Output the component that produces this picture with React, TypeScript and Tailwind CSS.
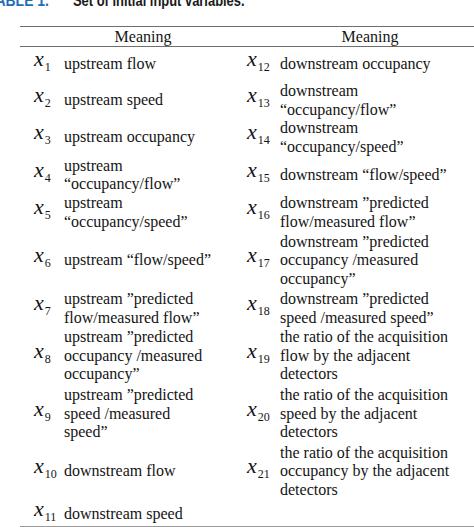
const ROWS: { h: number; l?: [string, string[]]; r?: [string, string[]] }[] = [
  { h: 35, l: ['1', ['upstream flow']], r: ['12', ['downstream occupancy']] },
  { h: 37, l: ['2', ['upstream speed']], r: ['13', ['downstream', '“occupancy/flow”']] },
  { h: 37, l: ['3', ['upstream occupancy']], r: ['14', ['downstream', '“occupancy/speed”']] },
  { h: 38, l: ['4', ['upstream', '“occupancy/flow”']], r: ['15', ['downstream “flow/speed”']] },
  { h: 37, l: ['5', ['upstream', '“occupancy/speed”']], r: ['16', ['downstream ”predicted', 'flow/measured flow”']] },
  { h: 59, l: ['6', ['upstream “flow/speed”']], r: ['17', ['downstream ”predicted', 'occupancy /measured', 'occupancy”']] },
  { h: 37, l: ['7', ['upstream ”predicted', 'flow/measured flow”']], r: ['18', ['downstream ”predicted', 'speed /measured speed”']] },
  { h: 58, l: ['8', ['upstream ”predicted', 'occupancy /measured', 'occupancy”']], r: ['19', ['the ratio of the acquisition', 'flow by the adjacent', 'detectors']] },
  { h: 58, l: ['9', ['upstream ”predicted', 'speed /measured', 'speed”']], r: ['20', ['the ratio of the acquisition', 'speed by the adjacent', 'detectors']] },
  { h: 57, l: ['10', ['downstream flow']], r: ['21', ['the ratio of the acquisition', 'occupancy by the adjacent', 'detectors']] },
  { h: 26, l: ['11', ['downstream speed']] },
];

function Variable({ sub, right }: { sub: string; right?: boolean }) {
  return (
    <div className={`flex items-center pb-[3px] ${right ? 'pl-[25px]' : 'pl-[14px]'}`}>
      <span className="whitespace-nowrap leading-[18px]">
        <span className="italic text-[22px]">x</span>
        <span className="text-[12px] align-[-5px] ml-[1px]">{sub}</span>
      </span>
    </div>
  );
}

function Meaning({ lines }: { lines: string[] }) {
  return (
    <div className="flex flex-col justify-center text-[16px] leading-[18.5px] whitespace-nowrap">
      {lines.map((t, i) => (
        <span key={i}>{t}</span>
      ))}
    </div>
  );
}

export default function App() {
  return (
    <div
      className="w-[474px] h-[527px] overflow-hidden bg-white text-[#141414]"
      style={{ fontFamily: '"Liberation Serif", "Times New Roman", serif' }}
    >
      {/* Caption, cut off by the crop */}
      <div
        className="-mt-[8px] h-[17px] flex items-start text-[17px] leading-[17px] font-bold whitespace-nowrap"
        style={{ fontFamily: '"Liberation Sans", Arial, sans-serif' }}
      >
        <span className="inline-block -ml-[12px] w-[85px] origin-left scale-x-[0.82] text-[#1d70b8]">TABLE 1.</span>
        <span className="inline-block origin-left scale-x-[0.76] text-[#1a1a1a]">Set of initial input variables.</span>
      </div>

      <div className="ml-[20px] mt-[17px] border-t-[1.5px] border-b-[2px] border-t-[#6e6e6e] border-b-[#9a9a9a]">
        {/* Header */}
        <div className="grid grid-cols-[44px_158px_58px_180px_1fr] h-[20px] border-b-[1.5px] border-[#6e6e6e] text-[16px] leading-[20px]">
          <div />
          <div className="text-center">Meaning</div>
          <div />
          <div className="text-center">Meaning</div>
          <div />
        </div>

        {ROWS.map((row, i) => (
          <div
            key={i}
            className="grid grid-cols-[44px_158px_58px_180px_1fr]"
            style={{ height: row.h }}
          >
            {row.l ? <Variable sub={row.l[0]} /> : <div />}
            {row.l ? <Meaning lines={row.l[1]} /> : <div />}
            {row.r ? <Variable sub={row.r[0]} right /> : <div />}
            {row.r ? <Meaning lines={row.r[1]} /> : <div />}
            <div />
          </div>
        ))}
      </div>
    </div>
  );
}
